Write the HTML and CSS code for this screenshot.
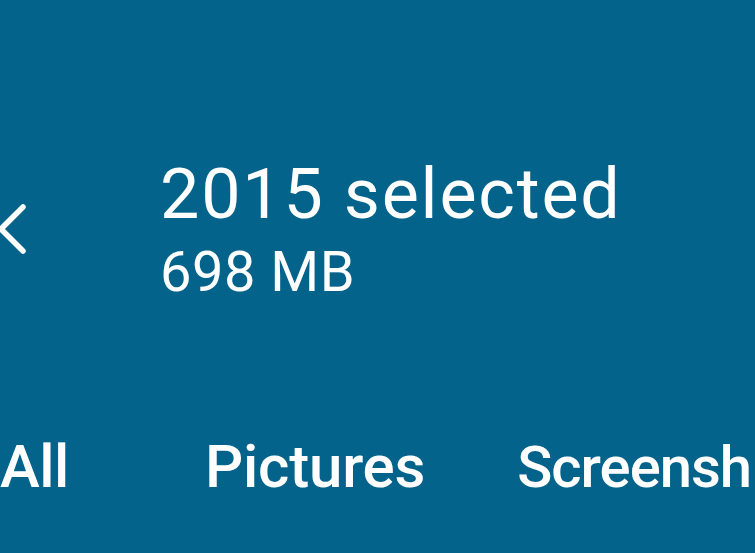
FILE: index.html
```html
<!DOCTYPE html>
<html lang="en">
<head>
  <meta charset="UTF-8" />
  <title>Selection</title>
  <link rel="stylesheet" href="styles.css">
</head>
<body>
  <header class="appbar">
    <button class="back" aria-label="Back">
      <svg width="40" height="60" viewBox="0 0 40 60">
        <path d="M23 8 L1 30 L23 52" fill="none" stroke="#fff" stroke-width="5.5" stroke-linecap="round" stroke-linejoin="round"/>
      </svg>
    </button>
    <div class="title-block">
      <div class="title">2015 selected</div>
      <div class="subtitle">698 MB</div>
    </div>
  </header>
  <nav class="tabs">
    <span class="tab tab-all">All</span>
    <span class="tab tab-pictures">Pictures</span>
    <span class="tab tab-shots">Screensh</span>
  </nav>
</body>
</html>
```

FILE: styles.css
```css
* { margin: 0; padding: 0; box-sizing: border-box; }
html, body {
  width: 755px;
  height: 553px;
  overflow: hidden;
  background: #03638b;
  color: #fff;
  font-family: Roboto, "Open Sans", sans-serif;
}
.appbar {
  display: flex;
  align-items: flex-start;
  padding-top: 152px;
}
.back {
  width: 160px;
  flex: none;
  background: none;
  border: none;
  padding-top: 47px;
  text-align: left;
}
.back svg { display: block; }
.title {
  font-size: 70px;
  line-height: 84px;
  letter-spacing: 1.8px;
  white-space: nowrap;
}
.subtitle {
  font-size: 56px;
  line-height: 64px;
  margin-top: 4px;
  letter-spacing: 0.5px;
}
.tabs {
  display: flex;
  white-space: nowrap;
  margin-top: 128px;
  font-size: 60px;
  line-height: 70px;
  letter-spacing: -0.5px;
  font-weight: 500;
}
.tab { flex: none; }
.tab-pictures { margin-left: 136px; letter-spacing: -0.2px; }
.tab-shots { margin-left: 92px; font-size: 58px; letter-spacing: -1px; }
```
